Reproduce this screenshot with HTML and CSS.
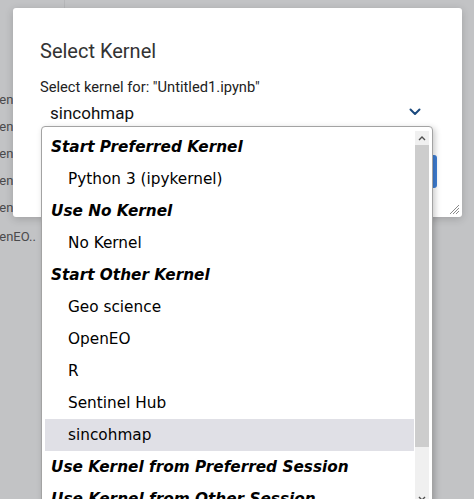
FILE: index.html
```html
<!DOCTYPE html>
<html lang="en">
<head>
    <meta charset="UTF-8">
    <meta name="viewport" content="width=device-width, initial-scale=1.0">
    <title>Select Kernel</title>
    <link rel="stylesheet" href="styles.css">
</head>
<body>
    <!-- file browser on the left, dimmed by the modal -->
    <div class="filebrowser">
        <div class="divider"></div>
        <ul class="files">
            <li>Open</li>
            <li>Open</li>
            <li>Open</li>
            <li>Open</li>
            <li>Open</li>
            <li>OpenEO..</li>
        </ul>
    </div>

    <!-- dialog -->
    <div class="dialog">
        <h2 class="dialog_title">Select Kernel</h2>
        <label class="dialog_label">Select kernel for: "Untitled1.ipynb"</label>
        <div class="kernel_select">
            <span>sincohmap</span>
            <svg class="chevron" width="12" height="8" viewBox="0 0 12 8">
                <path d="M1.5 1.5 L6 6 L10.5 1.5" fill="none" stroke="#1b4a7e" stroke-width="2" stroke-linecap="round" stroke-linejoin="round"/>
            </svg>
        </div>
        <div class="dialog_buttons">
            <button class="button_select">Select</button>
        </div>
        <svg class="grip" width="11" height="11" viewBox="0 0 11 11">
            <path d="M10 1 L1 10 M10 4 L4 10 M10 7 L7 10" stroke="#8a8a8a" stroke-width="1"/>
        </svg>
    </div>

    <!-- open list of the kernel select -->
    <div class="dropdown">
        <div class="options">
            <div class="group">Start Preferred Kernel</div>
            <div class="option">Python 3 (ipykernel)</div>
            <div class="group">Use No Kernel</div>
            <div class="option">No Kernel</div>
            <div class="group">Start Other Kernel</div>
            <div class="option">Geo science</div>
            <div class="option">OpenEO</div>
            <div class="option">R</div>
            <div class="option">Sentinel Hub</div>
            <div class="option selected">sincohmap</div>
            <div class="group">Use Kernel from Preferred Session</div>
            <div class="group">Use Kernel from Other Session</div>
        </div>
        <div class="scrollbar">
            <div class="scroll_arrow">
                <svg width="8" height="5" viewBox="0 0 8 5"><path d="M1 4 L4 1 L7 4" fill="none" stroke="#505050" stroke-width="1.4"/></svg>
            </div>
            <div class="scroll_thumb"></div>
            <div class="scroll_track"></div>
            <div class="scroll_arrow">
                <svg width="8" height="5" viewBox="0 0 8 5"><path d="M1 1 L4 4 L7 1" fill="none" stroke="#505050" stroke-width="1.4"/></svg>
            </div>
        </div>
    </div>
</body>
</html>
```

FILE: styles.css
```css
/*body*/
body{
    margin: 0;
    height: 499px;
    overflow: hidden;
    background-color: #c2c3c5;
    font-family: Roboto, "Liberation Sans", sans-serif;
}

/*file browser*/
.filebrowser{
    width: 64px;
    height: 100%;
    border-right: 1px solid #b6b7b9;
}
.files{
    list-style: none;
    margin: 0;
    padding: 90px 0 0 0;
    margin-left: -17px;
}
.files li{
    height: 27px;
    line-height: 20px;
    font-size: 13px;
    color: #4a4a4c;
    white-space: nowrap;
}
.files li:last-child{
    margin-top: 2px;
}

/*dialog*/
.dialog{
    position: absolute;
    left: 13px;
    top: 8px;
    width: 449px;
    height: 209px;
    box-sizing: border-box;
    padding: 31px 27px 0 27px;
    background-color: #fff;
    border-radius: 3px;
    box-shadow: 0 2px 8px rgba(0, 0, 0, 0.18);
    display: flex;
    flex-direction: column;
    color: #333;
}
.dialog_title{
    margin: 0;
    font-size: 20px;
    line-height: 24px;
    font-weight: normal;
    color: #333;
}
.dialog_label{
    margin-top: 16px;
    font-size: 14.7px;
    line-height: 17px;
    color: #222;
}
.kernel_select{
    margin-top: 7px;
    display: flex;
    align-items: center;
    justify-content: space-between;
    padding: 0 14px 0 10px;
    height: 20px;
    font-size: 17px;
    color: #111;
}
.chevron{
    margin-top: -3px;
}
.dialog_buttons{
    display: flex;
    justify-content: flex-end;
    margin-top: 32px;
}
.button_select{
    width: 80px;
    height: 33px;
    margin-right: -2px;
    border: none;
    border-radius: 3px;
    background-color: #3f7fd6;
    color: #fff;
    font-size: 14px;
}
.grip{
    position: absolute;
    right: 2px;
    bottom: 2px;
}

/*dropdown list*/
.dropdown{
    position: absolute;
    left: 41px;
    top: 126px;
    width: 392px;
    height: 380px;
    box-sizing: border-box;
    display: flex;
    background-color: #fff;
    border: 1px solid #a3a3a3;
    border-radius: 4px 4px 0 0;
    box-shadow: 2px 2px 6px rgba(0, 0, 0, 0.22);
    font-family: "DejaVu Sans", Verdana, sans-serif;
    font-size: 15.3px;
    color: #000;
}
.options{
    flex: 1;
    padding: 4px 0 0 3px;
}
.group, .option{
    height: 32px;
    line-height: 32px;
    white-space: nowrap;
}
.group{
    padding-left: 6px;
    font-weight: bold;
    font-style: italic;
}
.option{
    padding-left: 23px;
}
.selected{
    background-color: #e0e0e6;
}
.scrollbar{
    width: 14px;
    margin: 4px 3px 0 1px;
    display: flex;
    flex-direction: column;
    background-color: #f0f0f0;
}
.scroll_arrow{
    height: 14px;
    display: flex;
    align-items: center;
    justify-content: center;
}
.scroll_thumb{
    height: 302px;
    background-color: #cdcdcd;
}
.scroll_track{
    flex: 1;
}
```
